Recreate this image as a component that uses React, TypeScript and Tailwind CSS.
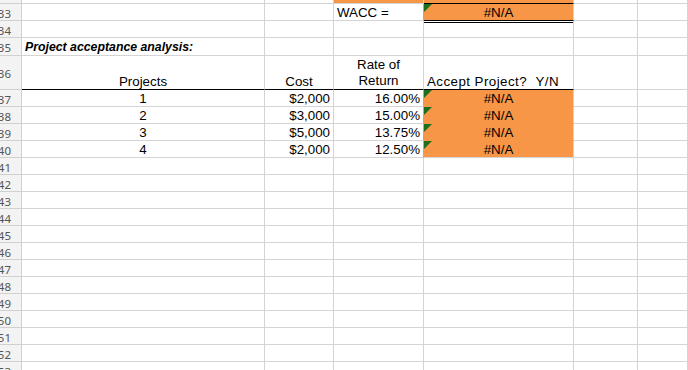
import React from 'react';

// column widths include the right gridline
const COLS = ['w-[243px]', 'w-[69px]', 'w-[90px]', 'w-[150px]', 'w-[64px]', 'flex-1'];

type Cell = {
  text?: React.ReactNode;
  align?: 'left' | 'center' | 'right';
  cls?: string;
  flag?: boolean;
};

type Row = { num: string; h: string; cells?: Record<number, Cell> };

const ORANGE = 'bg-[#f79646]';

const Flag = () => (
  <svg width="8" height="8" className="absolute left-0 top-0">
    <polygon points="0,0 8,0 0,8" fill="#1d6f1d" />
  </svg>
);

const na: Cell = { text: '#N/A', align: 'center', cls: ORANGE, flag: true };

const rows: Row[] = [
  { num: '32', h: 'h-[4px]', cells: { 2: { cls: ORANGE }, 3: { cls: ORANGE + ' border-b-black' } } },
  {
    num: '33',
    h: 'h-[17px]',
    cells: {
      2: { text: 'WACC =', cls: 'border-r-[#f79646]' },
      3: { ...na, cls: ORANGE + ' border-b-black' },
    },
  },
  { num: '34', h: 'h-[17px]', cells: { 3: { cls: 'shadow-[inset_0_1px_0_white,inset_0_2px_0_black]' } } },
  {
    num: '35',
    h: 'h-[18px]',
    cells: { 0: { text: <span className="font-bold italic text-[12.3px]">Project acceptance analysis:</span> } },
  },
  {
    num: '36',
    h: 'h-[34px]',
    cells: {
      0: { text: 'Projects', align: 'center', cls: 'border-b-black' },
      1: { text: 'Cost', align: 'center', cls: 'border-b-black' },
      2: {
        text: (
          <span className="text-center leading-[16px]">
            Rate of
            <br />
            Return
          </span>
        ),
        align: 'center',
        cls: 'border-b-black',
      },
      3: {
        text: <span className="tracking-[0.45px]">{'Accept Project?\u00a0\u00a0Y/N'}</span>,
        cls: 'border-b-black',
      },
    },
  },
];

const data = [
  ['1', '$2,000', '16.00%'],
  ['2', '$3,000', '15.00%'],
  ['3', '$5,000', '13.75%'],
  ['4', '$2,000', '12.50%'],
];

data.forEach((d, i) => {
  rows.push({
    num: String(37 + i),
    h: 'h-[17px]',
    cells: {
      0: { text: d[0], align: 'center' },
      1: { text: d[1], align: 'right' },
      2: { text: d[2], align: 'right', cls: 'border-r-[#f79646]' },
      3: { ...na, cls: ORANGE + (i < 3 ? ' border-b-[#f79646]' : '') },
    },
  });
});

for (let n = 41; n <= 53; n++) rows.push({ num: String(n), h: 'h-[17px]' });

const alignCls = { left: 'justify-start', center: 'justify-center', right: 'justify-end' };

const SheetRow: React.FC<{ row: Row }> = ({ row }) => (
  <div className={`flex shrink-0 ${row.h}`}>
    <div className="w-[22px] shrink-0 flex items-center justify-end pr-[10px] pt-[3px] overflow-hidden bg-[#f3f3f3] border-r border-b border-[#d0d0d0] font-['Noto_Sans',sans-serif] text-[11.5px] leading-none text-[#555]">
      {row.num !== '32' && <span className="whitespace-nowrap">{row.num}</span>}
    </div>
    {COLS.map((w, c) => {
      const cell = row.cells?.[c];
      return (
        <div
          key={c}
          className={`relative shrink-0 flex items-end border-r border-b border-[#d4d4d4] px-[3px] whitespace-nowrap ${w} ${
            alignCls[cell?.align ?? 'left']
          } ${cell?.cls ?? ''}`}
        >
          {cell?.flag && <Flag />}
          {cell?.text}
        </div>
      );
    })}
  </div>
);

export default function App() {
  return (
    <div className="w-[688px] h-[370px] overflow-hidden bg-white font-['Liberation_Sans',Arial,sans-serif] text-[13.33px] leading-[15px] text-black flex flex-col">
      {rows.map((r) => (
        <SheetRow key={r.num} row={r} />
      ))}
    </div>
  );
}
